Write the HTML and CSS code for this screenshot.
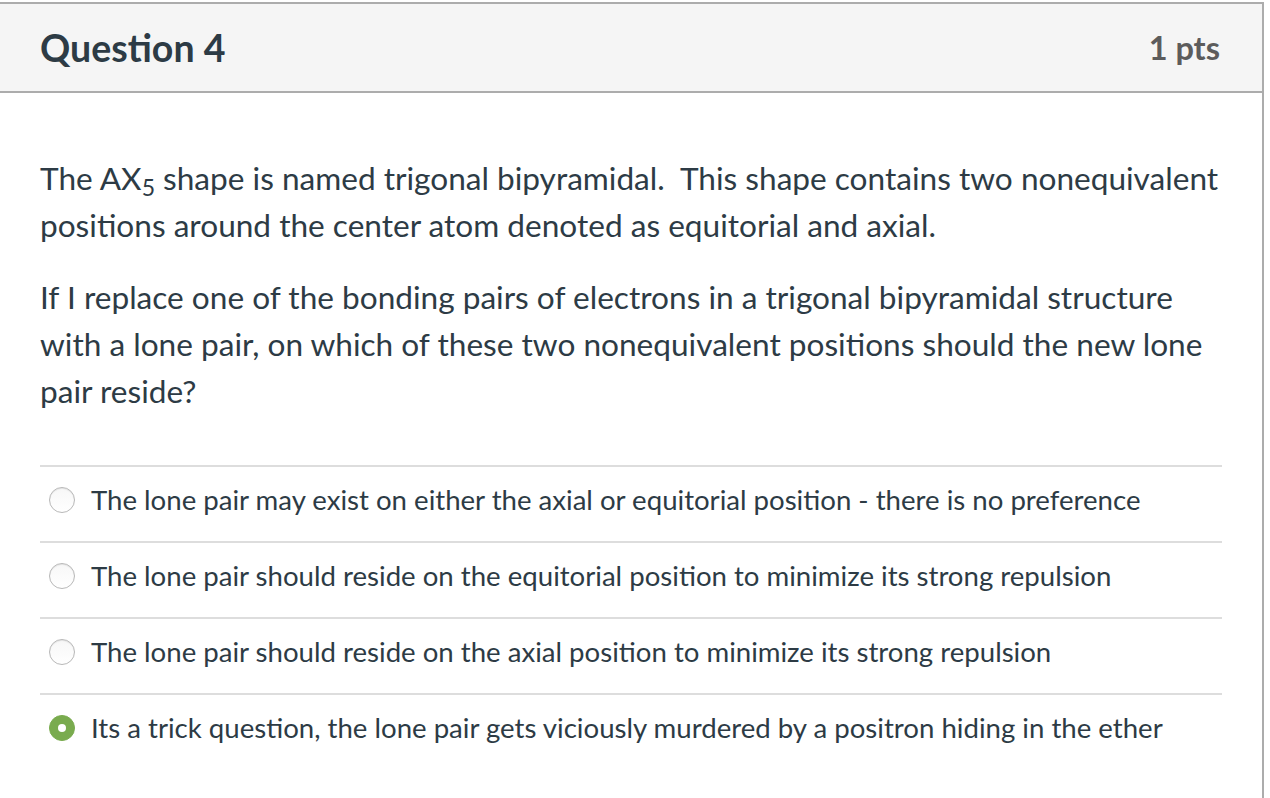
FILE: index.html
```html
<!DOCTYPE html>
<html lang="en">
<head>
<meta charset="utf-8">
<title>Question 4</title>
<link rel="stylesheet" href="styles.css">
</head>
<body>
<div class="question">
  <div class="q-header">
    <h2 class="q-title">Question 4</h2>
    <span class="q-points">1 pts</span>
  </div>
  <div class="q-body">
    <p class="q-text">The AX<sub>5</sub> shape is named trigonal bipyramidal.&nbsp; This shape contains two nonequivalent positions around the center atom denoted as equitorial and axial.</p>
    <p class="q-text">If I replace one of the bonding pairs of electrons in a trigonal bipyramidal structure with a lone pair, on which of these two nonequivalent positions should the new lone pair reside?</p>
    <div class="answers">
      <div class="answer"><span class="radio"></span><span class="answer-text">The lone pair may exist on either the axial or equitorial position - there is no preference</span></div>
      <div class="answer"><span class="radio"></span><span class="answer-text">The lone pair should reside on the equitorial position to minimize its strong repulsion</span></div>
      <div class="answer"><span class="radio"></span><span class="answer-text">The lone pair should reside on the axial position to minimize its strong repulsion</span></div>
      <div class="answer"><span class="radio checked"></span><span class="answer-text">Its a trick question, the lone pair gets viciously murdered by a positron hiding in the ether</span></div>
    </div>
  </div>
</div>
</body>
</html>
```
FILE: styles.css
```css
html, body {
  margin: 0;
  padding: 0;
  background: #ffffff;
  overflow: hidden;
}
body {
  font-family: Lato, "Open Sans", sans-serif;
  color: #2d3b45;
}
.question {
  margin: 2px 0 0 -2px;
  width: 1262px;
  border: 2px solid #acacac;
  border-bottom: none;
  height: 900px;
}
.q-header {
  background: #f5f5f5;
  border-bottom: 2px solid #acacac;
  height: 87px;
  display: flex;
  align-items: center;
  justify-content: space-between;
  padding: 0 42px 0 40px;
}
.q-title {
  margin: 0;
  font-size: 37.5px;
  font-weight: 700;
  color: #2d3b45;
}
.q-points {
  font-size: 32.5px;
  font-weight: 700;
  color: #5c5c5c;
}
.q-body {
  padding: 62px 40px 0 40px;
}
.q-text {
  margin: 0 0 25px 0;
  font-size: 31.6px;
  line-height: 47px;
}
.q-text sub {
  font-size: 23px;
  line-height: 0;
  vertical-align: -6px;
}
.answers {
  margin-top: 50px;
}
.answer {
  border-top: 2px solid #dddddd;
  height: 74px;
  display: flex;
  align-items: center;
  padding-left: 9px;
  padding-bottom: 8px;
  box-sizing: border-box;
  height: 76px;
}
.radio {
  flex: 0 0 auto;
  width: 24px;
  height: 24px;
  border-radius: 50%;
  border: 1px solid #b8b8b8;
  background: linear-gradient(#f7f7f7, #ffffff);
  box-shadow: inset 0 1px 1px rgba(0,0,0,0.08);
  margin-right: 16px;
  box-sizing: content-box;
}
.radio.checked {
  border-color: #79ab4e;
  background: #79ab4e;
  box-shadow: none;
  position: relative;
}
.radio.checked::after {
  content: "";
  position: absolute;
  left: 50%;
  top: 50%;
  width: 8px;
  height: 8px;
  margin: -4px 0 0 -4px;
  border-radius: 50%;
  background: #ffffff;
}
.answer-text {
  font-size: 27.6px;
  line-height: 36px;
}
```
